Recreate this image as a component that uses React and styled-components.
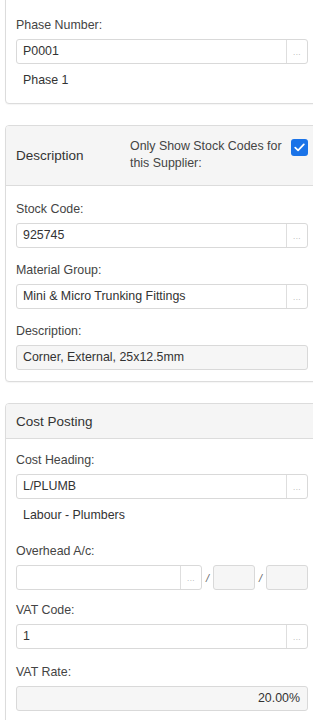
import React from 'react';
import styled, { createGlobalStyle } from 'styled-components';

const GlobalStyle = createGlobalStyle`
   html, body {
      margin: 0;
      padding: 0;
      background: #fff;
      overflow-x: hidden;
   }
   body {
      font-family: "Liberation Sans", Arial, sans-serif;
      color: #333;
   }
`;

const Page = styled.div`
   width: 330px;
   padding: 0 0 20px 5px;
   margin-top: -10px;
   display: flex;
   flex-direction: column;
   gap: 21px;
`;

const Panel = styled.section`
   width: 314px;
   box-sizing: border-box;
   border: 1px solid #dcdcdc;
   border-radius: 4px;
   background: #fff;
   box-shadow: 0 1px 1px rgba(0, 0, 0, 0.04);
`;

const PanelHeading = styled.div`
   display: flex;
   align-items: center;
   min-height: ${p => p.$tall ? 59 : 34}px;
   padding: 0 10px;
   background: #f5f5f5;
   border-bottom: 1px solid #dcdcdc;
   border-radius: 3px 3px 0 0;
`;

const PanelTitle = styled.h3`
   margin: 0;
   flex: 1;
   font-size: 13.5px;
   font-weight: normal;
   color: #333;
`;

const CheckLabel = styled.label`
   width: 152px;
   font-size: 12.4px;
   line-height: 17px;
   color: #444;
   margin-top: -1px;
`;

const CheckBox = styled.span`
   align-self: flex-start;
   width: 17px;
   height: 17px;
   margin: 13px 0 0 9px;
   border-radius: 3px;
   background: #1a73e8;
   display: flex;
   align-items: center;
   justify-content: center;
`;

const PanelBody = styled.div`
   padding: ${p => p.$pad};
`;

const Group = styled.div`
   margin-bottom: ${p => p.$mb ?? 12}px;
   &:last-child { margin-bottom: 0; }
`;

const Label = styled.label`
   display: block;
   font-size: 12.4px;
   line-height: 20px;
   margin-bottom: 4px;
   color: #444;
`;

const InputRow = styled.div`
   display: flex;
   align-items: center;
`;

const InputGroup = styled.div`
   display: flex;
   flex: ${p => p.$flex ?? 1};
   height: 25px;
   box-sizing: border-box;
   border: 1px solid #d9d9d9;
   border-radius: 3px;
   background: ${p => p.$muted ? '#f6f6f6' : '#fff'};
   overflow: hidden;
`;

const Field = styled.div`
   flex: 1;
   display: flex;
   align-items: center;
   justify-content: ${p => p.$right ? 'flex-end' : 'flex-start'};
   padding: 0 7px 1px 6px;
   font-size: 12.4px;
   color: #333;
   white-space: nowrap;
`;

const Lookup = styled.span`
   width: 20px;
   border-left: 1px solid #dedede;
   display: flex;
   align-items: center;
   justify-content: center;
   font-size: 8px;
   letter-spacing: 0.5px;
   color: #aaa;
   padding-top: 2px;
`;

const Slash = styled.span`
   width: 11px;
   text-align: center;
   font-size: 11px;
   color: #666;
   font-style: italic;
`;

const Static = styled.div`
   padding: 6px 0 0 7px;
   font-size: 12.4px;
   line-height: 20px;
   color: #333;
`;

const Check = () => (
   <svg width="11" height="9" viewBox="0 0 11 9">
      <path d="M1.2 4.6 L4.1 7.4 L9.8 1.4" fill="none" stroke="#fff" strokeWidth="1.7" strokeLinecap="round" strokeLinejoin="round" />
   </svg>
);

const LookupInput = ({ value, muted, flex }) => (
   <InputGroup $muted={muted} $flex={flex}>
      <Field>{value}</Field>
      <Lookup>...</Lookup>
   </InputGroup>
);

const App = () => (
   <>
      <GlobalStyle />
      <Page>
         <Panel>
            <PanelBody $pad="24px 10px 13px">
               <Label>Phase Number:</Label>
               <LookupInput value="P0001" />
               <Static>Phase 1</Static>
            </PanelBody>
         </Panel>

         <Panel>
            <PanelHeading $tall>
               <PanelTitle>Description</PanelTitle>
               <CheckLabel>Only Show Stock Codes for this Supplier:</CheckLabel>
               <CheckBox><Check /></CheckBox>
            </PanelHeading>
            <PanelBody $pad="13px 10px 11px">
               <Group>
                  <Label>Stock Code:</Label>
                  <LookupInput value="925745" />
               </Group>
               <Group>
                  <Label>Material Group:</Label>
                  <LookupInput value="Mini & Micro Trunking Fittings" />
               </Group>
               <Group>
                  <Label>Description:</Label>
                  <InputGroup $muted>
                     <Field>Corner, External, 25x12.5mm</Field>
                  </InputGroup>
               </Group>
            </PanelBody>
         </Panel>

         <Panel>
            <PanelHeading>
               <PanelTitle>Cost Posting</PanelTitle>
            </PanelHeading>
            <PanelBody $pad="11px 10px 12px">
               <Group $mb={16}>
                  <Label>Cost Heading:</Label>
                  <LookupInput value="L/PLUMB" />
                  <Static>Labour - Plumbers</Static>
               </Group>
               <Group $mb={10}>
                  <Label>Overhead A/c:</Label>
                  <InputRow>
                     <LookupInput value="" flex="0 0 186px" />
                     <Slash>/</Slash>
                     <InputGroup $muted $flex="0 0 42px" />
                     <Slash>/</Slash>
                     <InputGroup $muted $flex="0 0 42px" />
                  </InputRow>
               </Group>
               <Group $mb={13}>
                  <Label>VAT Code:</Label>
                  <LookupInput value="1" />
               </Group>
               <Group>
                  <Label>VAT Rate:</Label>
                  <InputGroup $muted>
                     <Field $right>20.00%</Field>
                  </InputGroup>
               </Group>
            </PanelBody>
         </Panel>
      </Page>
   </>
);

export default App;
